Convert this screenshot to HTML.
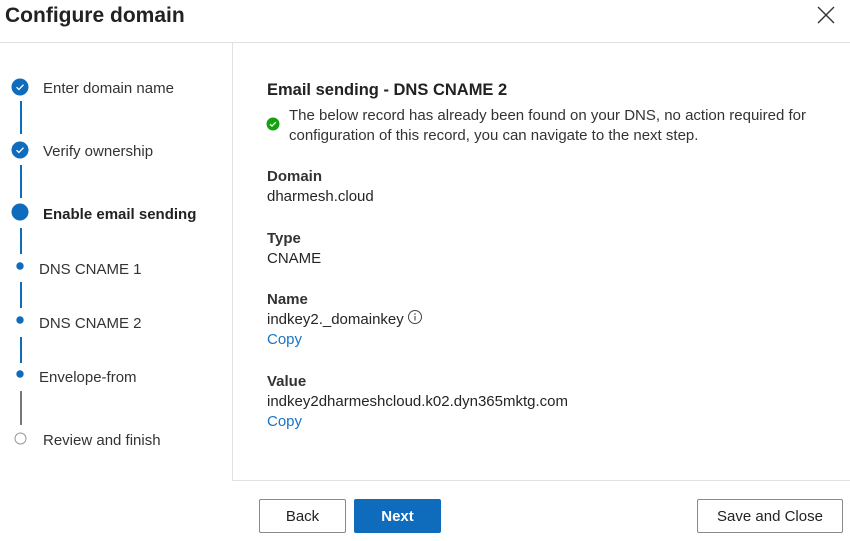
<!DOCTYPE html>
<html><head><meta charset="utf-8"><style>
*{margin:0;padding:0;box-sizing:border-box}
body{width:850px;height:541px;background:#fff;font-family:"Liberation Sans",sans-serif;color:#252525;position:relative;overflow:hidden}
.a{position:absolute;white-space:nowrap}
.t{font-size:15px}
.b{font-weight:bold}
.lbl{font-size:15px;font-weight:bold;color:#333}
.link{color:#1a73c7;font-size:15px}
.vl{position:absolute;left:19.5px;width:2px;background:#0f6cbd}
.btn{position:absolute;top:499px;height:34px;border:1px solid #8a8a8a;border-radius:2px;font-size:15px;display:flex;align-items:center;justify-content:center;background:#fff;color:#222}
</style></head><body>
<div class="a b" style="left:5px;top:4px;font-size:21px;color:#222">Configure domain</div>
<svg class="a" style="left:817px;top:6px" width="18" height="18"><path d="M1 1L17 17M17 1L1 17" stroke="#333" stroke-width="1.4"/></svg>
<div class="a" style="left:0;top:42px;width:850px;height:1px;background:#e1e1e1"></div>
<div class="a" style="left:232px;top:43px;width:1px;height:438px;background:#e1e1e1"></div>
<div class="a" style="left:232px;top:480px;width:618px;height:1px;background:#e1e1e1"></div>

<svg class="a" style="left:11px;top:78px" width="18" height="18"><circle cx="9" cy="9" r="8.5" fill="#0f6cbd"/><path d="M5.5 9.2l2.4 2.3 4.6-4.8" stroke="#fff" stroke-width="1.3" fill="none"/></svg>
<div class="vl" style="top:101px;height:33px"></div>
<svg class="a" style="left:11px;top:141px" width="18" height="18"><circle cx="9" cy="9" r="8.5" fill="#0f6cbd"/><path d="M5.5 9.2l2.4 2.3 4.6-4.8" stroke="#fff" stroke-width="1.3" fill="none"/></svg>
<div class="vl" style="top:165px;height:33px"></div>
<svg class="a" style="left:11px;top:203px" width="18" height="18"><circle cx="9" cy="9" r="8.5" fill="#0f6cbd"/></svg>
<div class="vl" style="top:228px;height:26px"></div>
<svg class="a" style="left:16px;top:262px" width="8" height="8"><circle cx="4" cy="4" r="3.7" fill="#0f6cbd"/></svg>
<div class="vl" style="top:282px;height:26px"></div>
<svg class="a" style="left:16px;top:316px" width="8" height="8"><circle cx="4" cy="4" r="3.7" fill="#0f6cbd"/></svg>
<div class="vl" style="top:337px;height:26px"></div>
<svg class="a" style="left:16px;top:370px" width="8" height="8"><circle cx="4" cy="4" r="3.7" fill="#0f6cbd"/></svg>
<div class="a" style="left:20px;top:391px;width:1.5px;height:34px;background:#777"></div>
<svg class="a" style="left:14px;top:432px" width="13" height="13"><circle cx="6.5" cy="6.5" r="5.5" fill="none" stroke="#999" stroke-width="1"/></svg>

<div class="a t" style="left:43px;top:80px;color:#333">Enter domain name</div>
<div class="a t" style="left:43px;top:143px;color:#333">Verify ownership</div>
<div class="a t b" style="left:43px;top:206px;color:#222">Enable email sending</div>
<div class="a t" style="left:39px;top:261px;color:#333">DNS CNAME 1</div>
<div class="a t" style="left:39px;top:315px;color:#333">DNS CNAME 2</div>
<div class="a t" style="left:39px;top:369px;color:#333">Envelope-from</div>
<div class="a t" style="left:43px;top:432px;color:#333">Review and finish</div>

<div class="a" style="left:267px;top:81px;font-size:16.5px;font-weight:bold;color:#222">Email sending - DNS CNAME 2</div>
<svg class="a" style="left:266px;top:117px" width="14" height="14"><circle cx="7" cy="7" r="6.5" fill="#13a10e"/><path d="M4 7.2l2 1.9 3.8-3.9" stroke="#fff" stroke-width="1.3" fill="none"/></svg>
<div class="a t" style="left:289px;top:106px;line-height:20px;color:#333">The below record has already been found on your DNS, no action required for<br>configuration of this record, you can navigate to the next step.</div>

<div class="a lbl" style="left:267px;top:168px">Domain</div>
<div class="a t" style="left:267px;top:188px">dharmesh.cloud</div>
<div class="a lbl" style="left:267px;top:230px">Type</div>
<div class="a t" style="left:267px;top:250px">CNAME</div>
<div class="a lbl" style="left:267px;top:291px">Name</div>
<div class="a t" style="left:267px;top:311px">indkey2._domainkey</div>
<svg class="a" style="left:407px;top:309px" width="16" height="16"><circle cx="8" cy="8" r="6.5" fill="none" stroke="#444" stroke-width="1"/><path d="M8 7v4.5" stroke="#444" stroke-width="1.1"/><circle cx="8" cy="5" r="0.8" fill="#444"/></svg>
<div class="a link" style="left:267px;top:331px">Copy</div>
<div class="a lbl" style="left:267px;top:373px">Value</div>
<div class="a t" style="left:267px;top:393px">indkey2dharmeshcloud.k02.dyn365mktg.com</div>
<div class="a link" style="left:267px;top:413px">Copy</div>

<div class="btn" style="left:259px;width:87px">Back</div>
<div class="btn b" style="left:354px;width:87px;background:#0f6cbd;border-color:#0f6cbd;color:#fff">Next</div>
<div class="btn" style="left:697px;width:146px">Save and Close</div>
</body></html>
